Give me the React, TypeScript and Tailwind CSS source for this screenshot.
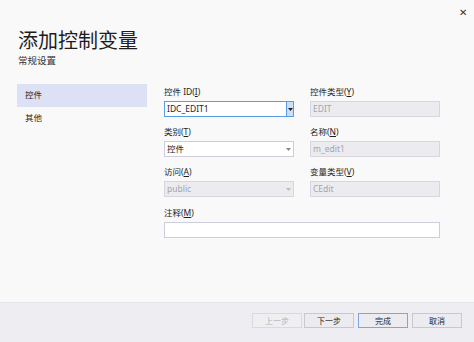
import React from "react";

const font = { fontFamily: '"Noto Sans", "Noto Sans CJK SC", sans-serif' };

function Label({ children }: { children: React.ReactNode }) {
  return <div className="h-[17px] flex items-center text-[8.5px] text-[#1e1e1e]">{children}</div>;
}

function Caret({ color }: { color: string }) {
  return (
    <svg width="5" height="3" viewBox="0 0 5 3" className="block">
      <path d="M0 0 L5 0 L2.5 3 Z" fill={color} />
    </svg>
  );
}

export default function App() {
  return (
    <div style={font} className="w-[474px] h-[342px] flex flex-col bg-[#f9f9f9] overflow-hidden relative">
      <div className="absolute right-[7px] top-[7px] text-[10px] leading-[10px] text-[#333]">✕</div>
      <div className="h-[84px] pl-[18px] pt-[29px]">
        <div className="text-[20px] leading-[24px] text-[#1e1e1e]">添加控制变量</div>
        <div className="text-[9.5px] leading-[10px] mt-[3px] text-[#333]">常规设置</div>
      </div>
      <div className="flex flex-1">
        <div className="ml-[17px] w-[130px] flex flex-col text-[8.5px] text-[#1e1e1e]">
          <div className="h-[23px] flex items-center pl-[8px] bg-[#dde1f6]">控件</div>
          <div className="h-[23px] flex items-center pl-[8px]">其他</div>
        </div>
        <div className="ml-[17px] w-[276px] flex flex-col">
          <div className="grid grid-cols-[130px_130px] gap-x-[16px]">
            <div>
              <Label>控件 ID(<span className="underline">I</span>)</Label>
              <div className="h-[16px] border border-[#5a9de6] bg-white flex items-center">
                <div className="flex-1 pl-[2px] text-[8.5px] text-[#1e1e1e]">IDC_EDIT1</div>
                <div className="w-[7px] h-full bg-[#c9e0f7] border-l border-[#5a9de6] flex items-center justify-center">
                  <Caret color="#222" />
                </div>
              </div>
            </div>
            <div>
              <Label>控件类型(<span className="underline">Y</span>)</Label>
              <div className="h-[16px] border border-[#d6d6dc] bg-[#ececf0] flex items-center pl-[2px] text-[8.5px] text-[#a2a4a8]">EDIT</div>
            </div>
            <div className="mt-[7px]">
              <Label>类别(<span className="underline">T</span>)</Label>
              <div className="h-[16px] border border-[#cccedb] bg-white flex items-center">
                <div className="flex-1 pl-[2px] text-[8.5px] text-[#1e1e1e]">控件</div>
                <div className="w-[10px] flex items-center justify-center"><Caret color="#888" /></div>
              </div>
            </div>
            <div className="mt-[7px]">
              <Label>名称(<span className="underline">N</span>)</Label>
              <div className="h-[16px] border border-[#d6d6dc] bg-[#ececf0] flex items-center pl-[2px] text-[8.5px] text-[#a2a4a8]">m_edit1</div>
            </div>
            <div className="mt-[7px]">
              <Label>访问(<span className="underline">A</span>)</Label>
              <div className="h-[16px] border border-[#d6d6dc] bg-[#ececf0] flex items-center">
                <div className="flex-1 pl-[2px] text-[8.5px] text-[#a2a4a8]">public</div>
                <div className="w-[10px] flex items-center justify-center"><Caret color="#bbb" /></div>
              </div>
            </div>
            <div className="mt-[7px]">
              <Label>变量类型(<span className="underline">V</span>)</Label>
              <div className="h-[16px] border border-[#d6d6dc] bg-[#ececf0] flex items-center pl-[2px] text-[8.5px] text-[#a2a4a8]">CEdit</div>
            </div>
          </div>
          <div className="mt-[8px]">
            <Label>注释(<span className="underline">M</span>)</Label>
            <div className="h-[16px] border border-[#cccedb] bg-white" />
          </div>
        </div>
      </div>
      <div className="h-[40px] bg-[#eeeef2] border-t border-[#e4e4ea] flex justify-end items-start pt-[10px] pr-[12px] text-[8px]">
        <div className="w-[50px] h-[15px] border border-[#dadade] bg-[#efeff2] flex items-center justify-center text-[#b4b4b8]">上一步</div>
        <div className="w-[50px] h-[15px] ml-[2px] border border-[#c8c8d0] bg-[#ececf0] flex items-center justify-center text-[#1e1e1e]">下一步</div>
        <div className="w-[50px] h-[15px] ml-[4px] border border-[#7aa7e0] bg-[#ececf0] flex items-center justify-center text-[#1e1e1e]">完成</div>
        <div className="w-[50px] h-[15px] ml-[4px] border border-[#c8c8d0] bg-[#ececf0] flex items-center justify-center text-[#1e1e1e]">取消</div>
      </div>
    </div>
  );
}
